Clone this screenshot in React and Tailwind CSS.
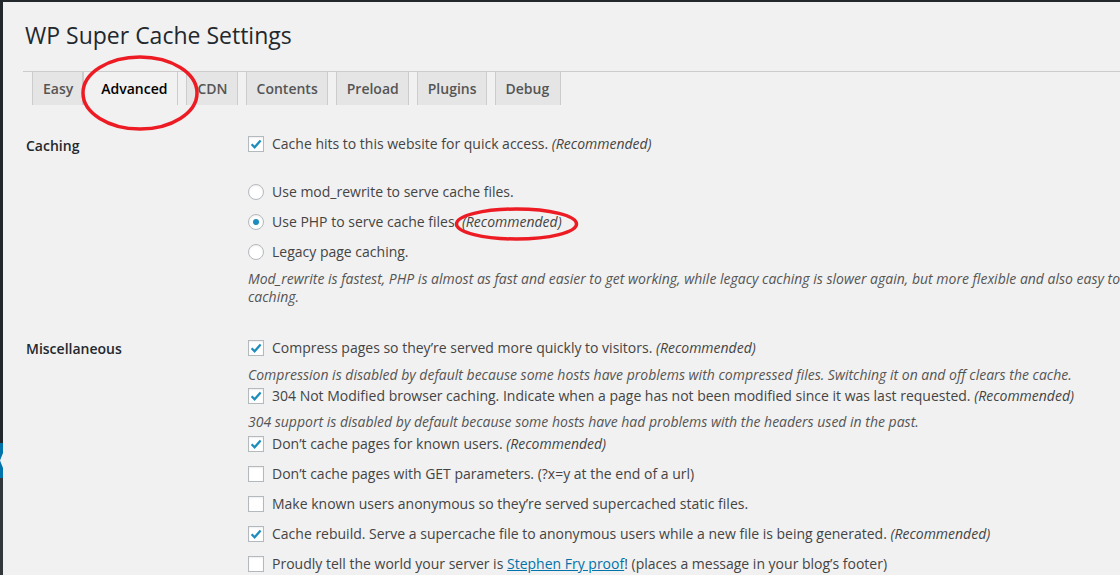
import React from 'react';

const tabs = ['Easy', 'Advanced', 'CDN', 'Contents', 'Preload', 'Plugins', 'Debug'];

function Checkbox({ checked }) {
  return (
    <span className="w-[16px] h-[16px] shrink-0 bg-white border border-[#b4b9be] shadow-[inset_0_1px_2px_rgba(0,0,0,0.07)] flex items-center justify-center">
      {checked && (
        <svg width="14" height="14" viewBox="0 0 14 14">
          <path d="M2.6 7.2 L5.6 10.2 L11.6 3.4" fill="none" stroke="#1e8cbe" strokeWidth="2.3" />
        </svg>
      )}
    </span>
  );
}

function Radio({ checked }) {
  return (
    <span className="w-[16px] h-[16px] shrink-0 rounded-full bg-white border border-[#b4b9be] shadow-[inset_0_1px_2px_rgba(0,0,0,0.07)] flex items-center justify-center">
      {checked && <span className="w-[6px] h-[6px] rounded-full bg-[#1e8cbe]" />}
    </span>
  );
}

function Rec() {
  return <em className="italic">(Recommended)</em>;
}

function Line({ mt, children }) {
  return <div className={`flex items-center gap-[8px] leading-[20px] whitespace-nowrap ${mt}`}>{children}</div>;
}

function Desc({ mt, children }) {
  return <p className={`text-[14px] leading-[18px] italic text-[#555] whitespace-nowrap ${mt}`}>{children}</p>;
}

export default function App() {
  return (
    <div
      className="relative w-[1120px] h-[575px] overflow-hidden bg-[#f1f1f1] flex flex-col text-[14px] text-[#444]"
      style={{ fontFamily: '"Open Sans", "Noto Sans", sans-serif' }}
    >
      <div className="h-[2px] bg-[#23282d] shrink-0" />
      <div className="flex flex-1">
        {/* admin menu edge */}
        <div className="w-[3px] flex flex-col shrink-0">
          <div className="h-[441px] bg-[#23282d]" />
          <div className="h-[35px] bg-[#0073aa] relative">
            <svg className="absolute left-0 top-[10px]" width="3" height="15" viewBox="0 0 3 15">
              <polygon points="3,0 0,7.5 3,15" fill="#f1f1f1" />
            </svg>
          </div>
          <div className="flex-1 bg-[#32373c]" />
        </div>

        <div className="flex-1 pl-[20px] min-w-0">
          <h1 className="mt-[19px] text-[23px] leading-[29px] text-[#23282d] pl-[2px]">WP Super Cache Settings</h1>

          <div className="mt-[21px] border-t border-[#ccc] flex">
            {tabs.map((t, i) => (
              <div
                key={t}
                className={`border-x border-[#ccc] py-[5px] leading-[23px] font-semibold ${
                  t === 'Advanced'
                    ? 'bg-[#f1f1f1] text-black pl-[17px] pr-[10px]'
                    : 'bg-[#e5e5e5] text-[#555] pl-[10px] pr-[9px] ml-[8px]'
                } ${i === 0 ? 'ml-[9px]' : ''} ${t === 'Debug' ? 'pr-[11px]' : ''}`}
              >
                {t}
              </div>
            ))}
          </div>

          {/* Caching */}
          <div className="mt-[29px] flex">
            <div className="w-[225px] shrink-0 pl-[3px] mt-[2px] leading-[20px] font-semibold text-[#23282d]">Caching</div>
            <div>
              <Line mt="">
                <Checkbox checked />
                <span>Cache hits to this website for quick access. <Rec /></span>
              </Line>
              <Line mt="mt-[28px]">
                <Radio />
                <span>Use mod_rewrite to serve cache files.</span>
              </Line>
              <Line mt="mt-[10px]">
                <Radio checked />
                <span>Use PHP to serve cache files. <Rec /></span>
              </Line>
              <Line mt="mt-[10px]">
                <Radio />
                <span>Legacy page caching.</span>
              </Line>
              <Desc mt="mt-[8px]">
                Mod_rewrite is fastest, PHP is almost as fast and easier to get working, while legacy caching is slower again, but more flexible and also easy to get working. New users should use PHP
                <br />
                caching.
              </Desc>
            </div>
          </div>

          {/* Miscellaneous */}
          <div className="mt-[32px] flex">
            <div className="w-[225px] shrink-0 pl-[3px] mt-[1px] leading-[20px] font-semibold text-[#23282d]">Miscellaneous</div>
            <div>
              <Line mt="">
                <Checkbox checked />
                <span>Compress pages so they’re served more quickly to visitors. <Rec /></span>
              </Line>
              <Desc mt="mt-[8px]">
                Compression is disabled by default because some hosts have problems with compressed files. Switching it on and off clears the cache.
              </Desc>
              <Line mt="mt-[2px]">
                <Checkbox checked />
                <span>304 Not Modified browser caching. Indicate when a page has not been modified since it was last requested. <Rec /></span>
              </Line>
              <Desc mt="mt-[7px]">
                304 support is disabled by default because some hosts have had problems with the headers used in the past.
              </Desc>
              <Line mt="mt-[3px]">
                <Checkbox checked />
                <span>Don’t cache pages for known users. <Rec /></span>
              </Line>
              <Line mt="mt-[10px]">
                <Checkbox />
                <span>Don’t cache pages with GET parameters. (?x=y at the end of a url)</span>
              </Line>
              <Line mt="mt-[10px]">
                <Checkbox />
                <span>Make known users anonymous so they’re served supercached static files.</span>
              </Line>
              <Line mt="mt-[10px]">
                <Checkbox checked />
                <span>Cache rebuild. Serve a supercache file to anonymous users while a new file is being generated. <Rec /></span>
              </Line>
              <Line mt="mt-[10px]">
                <Checkbox />
                <span>
                  Proudly tell the world your server is{' '}
                  <a href="#" className="text-[#0073aa] underline">Stephen Fry proof</a>! (places a message in your blog’s footer)
                </span>
              </Line>
            </div>
          </div>
        </div>
      </div>

      {/* hand-drawn annotations */}
      <svg className="absolute inset-0 pointer-events-none" width="1120" height="575">
        <ellipse cx="140" cy="93" rx="57" ry="36" fill="none" stroke="#ed1c24" strokeWidth="3.5" />
        <ellipse cx="516.5" cy="224" rx="60" ry="15" fill="none" stroke="#ed1c24" strokeWidth="3.5" />
      </svg>
    </div>
  );
}
